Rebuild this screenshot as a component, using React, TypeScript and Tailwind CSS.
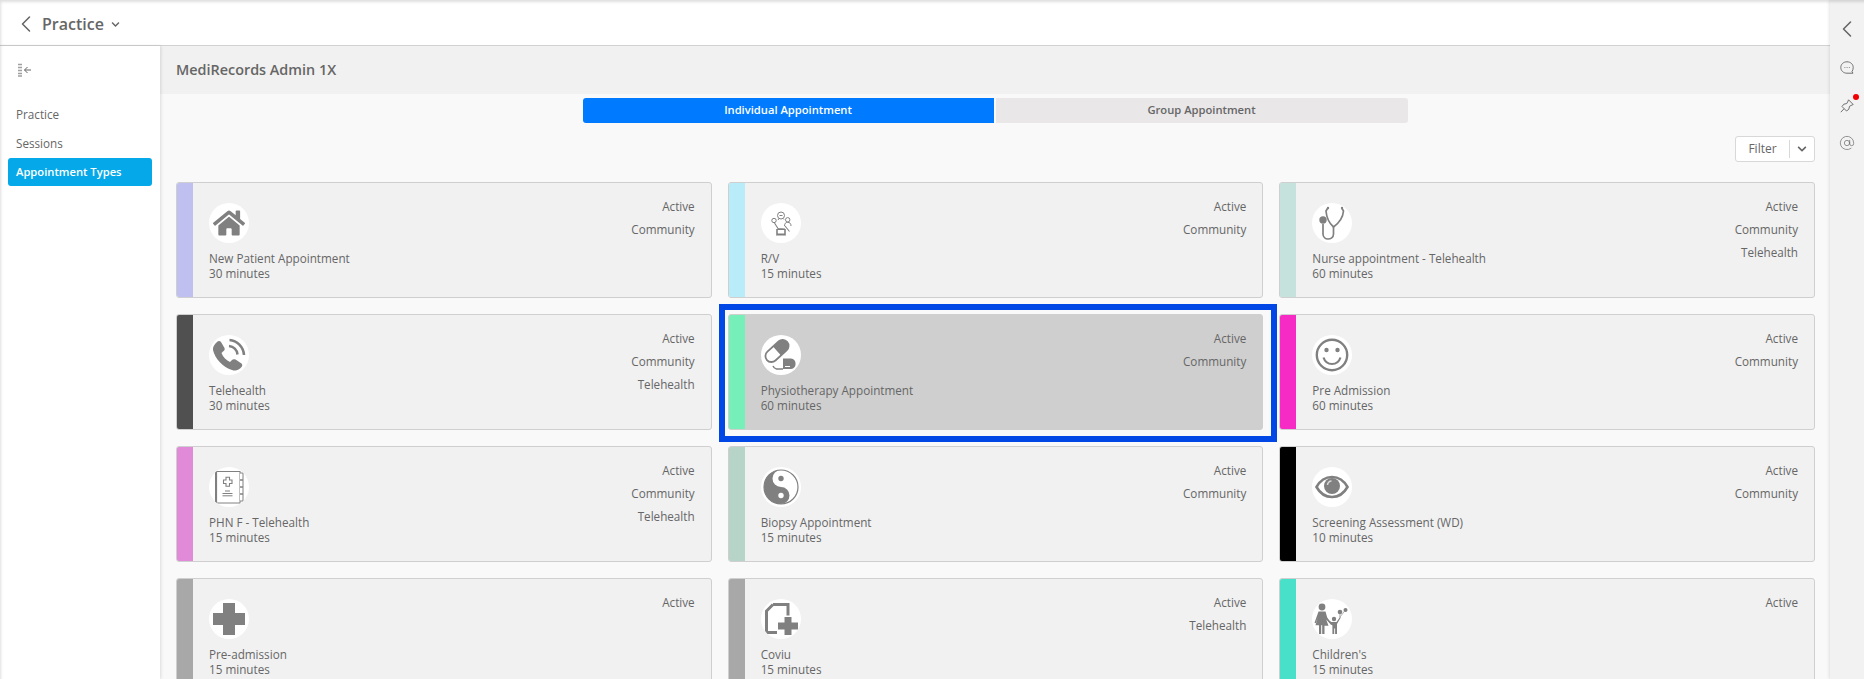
import { ReactNode } from "react"
import { FaHome, FaChevronDown } from "react-icons/fa"
import { ChevronLeft, AtSign } from "lucide-react"

const GREY = "#808080"

const DentistIcon = () => (
  <svg viewBox="0 0 40 40" className="h-10 w-10" fill="none" stroke={GREY} strokeWidth="1">
    <circle cx="20" cy="12.500" r="3.500" />
    <path d="M18.500 12.500h3M18 15.500l-1 1.500M22 15.500l1 1" />
    <circle cx="13" cy="17.500" r="2.200" />
    <circle cx="26.700" cy="16.800" r="2.200" />
    <path d="M23.500 23c0-2.500 1.200-3.700 3.200-3.700s3.300 1.200 3.300 3.700" />
    <path d="M13.500 20l3.500 5.500 7 .5M24 23l4.500 5.500M16 26v5M24 26v5" strokeWidth="1.100" />
    <path d="M16 26.500h8v4.500h-8zM15 32h10" strokeWidth="1.100" />
  </svg>
)

const StethoscopeIcon = () => (
  <svg viewBox="0 0 40 40" className="h-10 w-10" fill="none" stroke={GREY} strokeWidth="1.700">
    <path d="M15.500 5.500L14 8c.5 6 3 12 7.500 16 5.500-4 9.500-10 10-16l-1.500-2.500" />
    <path d="M21.500 24v7c0 3.500-3 5-5.500 5s-5-1.800-5-5v-10" />
    <circle cx="11" cy="17" r="3.700" fill={GREY} stroke="none" />
    <circle cx="16" cy="5" r="1.200" fill={GREY} stroke="none" />
    <circle cx="30" cy="5" r="1.200" fill={GREY} stroke="none" />
  </svg>
)

const PhoneIcon = () => (
  <svg viewBox="0 0 40 40" className="h-10 w-10" fill="none">
    <path
      d="M8 7c1.500-1.500 3-1 4 0l3.500 6c.5 1.500 0 2.500-1.500 3.500L12.500 18c1.500 4 5 7.500 8.500 9l2-2c1-1 2-1 3.500-.5l6 4c1 1 1 2.500 0 3.500-2.500 3-5.500 4.500-9.500 3C14 32 6 24 4 15c-.5-3 1.500-6 4-8z"
      fill={GREY}
    />
    <path d="M20 11c4.500.5 8 4 8.500 8.500M20.500 5c7.500.5 14 7 14.500 15" stroke={GREY} strokeWidth="2.600" />
  </svg>
)

const PillsIcon = () => (
  <svg viewBox="0 0 40 40" className="h-10 w-10" fill="none">
    <path d="M22 23.500h8a5.300 5.300 0 0 1 0 10.500h-8z" fill={GREY} />
    <path d="M22 34h-6.500a5 5 0 0 1-3.500-3" stroke={GREY} strokeWidth="1.500" />
    <path d="M24 31.500h5" stroke="#fff" strokeWidth="1" />
    <g transform="rotate(-42 16 16)">
      <rect x="2.500" y="10" width="27" height="12" rx="6" fill="#fff" stroke={GREY} strokeWidth="1.800" />
      <path d="M16 10h7.500a6 6 0 0 1 0 12H16z" fill={GREY} />
    </g>
  </svg>
)

const SmileIcon = () => (
  <svg viewBox="0 0 40 40" className="h-10 w-10" fill="none" stroke={GREY}>
    <circle cx="20" cy="20" r="15.200" strokeWidth="2.400" />
    <circle cx="14.500" cy="15" r="2.200" fill={GREY} stroke="none" />
    <circle cx="25.500" cy="15" r="2.200" fill={GREY} stroke="none" />
    <path d="M11.500 22.500c1.500 4.500 4.600 6.500 8.500 6.500s7-2 8.500-6.500" strokeWidth="2.200" />
  </svg>
)

const BookIcon = () => (
  <svg viewBox="0 0 40 40" className="h-10 w-10" fill="none" stroke={GREY}>
    <rect x="6.500" y="4.500" width="24.500" height="31.500" strokeWidth="1" fill="#fff" />
    <path d="M7.500 4.500v31.500" strokeWidth="1.200" />
    <path d="M14.500 13h2.500v-2.800h3.500V13h2.500v3.500h-2.500v2.800H17v-2.800h-2.500z" strokeWidth="1.100" />
    <path d="M16 24h5M13.500 26.500h10M13.500 28.800h10" strokeWidth="1" />
    <path d="M31 6h3v7h-3M31 13h3v7h-3M31 20h3v7h-3M31 27h3v7h-3" strokeWidth="1" fill="#fff" />
  </svg>
)

const YinYangIcon = () => (
  <svg viewBox="0 0 40 40" className="h-10 w-10">
    <circle cx="20" cy="20" r="17" fill="#fff" stroke={GREY} strokeWidth="1.200" />
    <path d="M20 3a17 17 0 0 0 0 34 8.500 8.500 0 0 0 0-17 8.500 8.500 0 0 1 0-17z" fill={GREY} />
    <circle cx="20" cy="11.500" r="2.700" fill={GREY} />
    <circle cx="20" cy="28.500" r="2.700" fill="#fff" />
  </svg>
)

const EyeIcon = () => (
  <svg viewBox="0 0 40 40" className="h-10 w-10" fill="none">
    <path d="M4.500 20c3.600-6.400 9-10 15.500-10s11.900 3.600 15.500 10c-3.600 6.400-9 10-15.500 10S8.100 26.400 4.500 20z" stroke={GREY} strokeWidth="2.600" />
    <circle cx="20" cy="19" r="8" fill={GREY} />
    <path d="M15.500 18c0-2.200 1.800-4 4-4" stroke="#d9d9d9" strokeWidth="1.500" />
  </svg>
)

const PlusIcon = () => (
  <svg viewBox="0 0 40 40" className="h-10 w-10">
    <path d="M14 4h12v10h10v12H26v10H14V26H4V14h10z" fill={GREY} />
  </svg>
)

const FilePlusIcon = () => (
  <svg viewBox="0 0 40 40" className="h-10 w-10" fill="none">
    <path d="M12 5.500h15v11M12 5.500L5.500 12v21.500H16" stroke={GREY} strokeWidth="3" />
    <path d="M23.500 18h7v5.500H37v7h-6.500V36h-7v-5.500H17v-7h6.500z" fill={GREY} />
  </svg>
)

const FamilyIcon = () => (
  <svg viewBox="0 0 40 40" className="h-10 w-10" fill={GREY}>
    <circle cx="10" cy="8" r="3.400" />
    <path d="M6.500 12.500h7l1.700 6 5 6.700-1 .8-5-5.500 2.300 6.300h-4V35h-2.300v-8.700h-1V35H7v-8.700H3.500l2.300-8-2 6-1.300-.5z" />
    <circle cx="22" cy="20" r="2.200" />
    <path d="M19.500 23h5l3.500-5 .8.500-3.800 6.500V35h-1.900v-5.500h-.9V35h-1.800v-8.500l-4-4 .8-.8z" />
    <circle cx="28" cy="13" r="2.300" />
    <circle cx="33.500" cy="11" r="2" />
    <path d="M27.800 18.500L28 14M28 18l5-6.500" stroke={GREY} strokeWidth=".6" fill="none" />
  </svg>
)

const BubbleIcon = () => (
  <svg viewBox="0 0 14 14" className="h-[14px] w-[14px]" fill="none" stroke="#707070" strokeWidth="1">
    <path d="M7 .8C3.400.8.800 3.300.800 6.500S3.400 12.200 7 12.200h6l-1-1.700c.8-1 1.200-2.500 1.200-4C13.200 3.300 10.600.8 7 .8z" />
    <path d="M4.500 6.500h.8M6.700 6.500h.8M8.900 6.500h.8" />
  </svg>
)

const ThumbtackIcon = () => (
  <svg viewBox="0 0 14 14" className="h-[14px] w-[14px]" fill="none" stroke="#707070" strokeWidth="1" strokeLinejoin="round">
    <path d="M8.500 .8l4.700 4.700-1.200.5-2.500 1.300-.7 3L6.500 12 2 7.500l1.800-2.300 3-.7 1.300-2.500z" />
    <path d="M4 9.800L.8 13.200" />
  </svg>
)

interface Appointment {
  name: string
  duration: string
  color: string
  icon: ReactNode
  tags: string[]
}

const APPOINTMENTS: Appointment[] = [
  { name: "New Patient Appointment", duration: "30 minutes", color: "#c0c0f0", icon: <FaHome size={32} color={GREY} />, tags: ["Active", "Community"] },
  { name: "R/V", duration: "15 minutes", color: "#b8ecf8", icon: <DentistIcon />, tags: ["Active", "Community"] },
  { name: "Nurse appointment - Telehealth", duration: "60 minutes", color: "#c6e2dc", icon: <StethoscopeIcon />, tags: ["Active", "Community", "Telehealth"] },
  { name: "Telehealth", duration: "30 minutes", color: "#505050", icon: <PhoneIcon />, tags: ["Active", "Community", "Telehealth"] },
  { name: "Physiotherapy Appointment", duration: "60 minutes", color: "#76efb8", icon: <PillsIcon />, tags: ["Active", "Community"] },
  { name: "Pre Admission", duration: "60 minutes", color: "#f62bc5", icon: <SmileIcon />, tags: ["Active", "Community"] },
  { name: "PHN F - Telehealth", duration: "15 minutes", color: "#e08ad8", icon: <BookIcon />, tags: ["Active", "Community", "Telehealth"] },
  { name: "Biopsy Appointment", duration: "15 minutes", color: "#b6d4c8", icon: <YinYangIcon />, tags: ["Active", "Community"] },
  { name: "Screening Assessment (WD)", duration: "10 minutes", color: "#000000", icon: <EyeIcon />, tags: ["Active", "Community"] },
  { name: "Pre-admission", duration: "15 minutes", color: "#a8a8a8", icon: <PlusIcon />, tags: ["Active"] },
  { name: "Coviu", duration: "15 minutes", color: "#a8a8a8", icon: <FilePlusIcon />, tags: ["Active", "Telehealth"] },
  { name: "Children's", duration: "15 minutes", color: "#48e0c8", icon: <FamilyIcon />, tags: ["Active"] },
]

function AppointmentCard({ item, selected }: { item: Appointment; selected?: boolean }) {
  return (
    <div
      className={`relative flex h-[116px] rounded-[3px] border ${selected ? "border-[#cfcfcf] bg-[#cfcfcf]" : "border-[#cfcfcf] bg-[#f1f1f1]"}`}
    >
      {/* Highlight frame drawn over the selected card */}
      {selected && (
        <div className="pointer-events-none absolute -bottom-[13px] -left-[10px] -right-[15px] -top-[11px] border-[6px] border-[#0047e6]" />
      )}
      <div className="w-4 shrink-0 rounded-l-[2px]" style={{ backgroundColor: item.color }} />
      <div className="flex flex-1 justify-between pl-4 pr-4">
        <div className="pt-5">
          <div className="flex h-10 w-10 items-center justify-center overflow-hidden rounded-full bg-white">
            {item.icon}
          </div>
          <p className="mt-2 leading-[15px]">{item.name}</p>
          <p className="leading-[15px]">{item.duration}</p>
        </div>
        <div className="flex flex-col items-end gap-[7px] pt-[15px]">
          {item.tags.map((tag) => (
            <span key={tag} className="leading-4">{tag}</span>
          ))}
        </div>
      </div>
    </div>
  )
}

export default function App() {
  return (
    <div className="relative flex h-[679px] w-[1864px] overflow-hidden bg-white font-['Open_Sans','Noto_Sans',sans-serif] text-[11.7px] text-[#666666]">
      <div className="flex min-w-0 flex-1 flex-col">
        <header className="flex h-[46px] shrink-0 items-center gap-[2px] border-b border-[#d2d2d2] pl-3 pt-[3px]">
          <ChevronLeft size={28} strokeWidth={1.300} color="#666666" />
          <span className="flex items-center gap-[7px] text-base font-semibold leading-none">
            Practice
            <FaChevronDown size={9} />
          </span>
        </header>

        <div className="flex min-h-0 flex-1">
          <aside className="z-10 w-[160px] shrink-0 bg-white px-2 shadow-[1px_0_3px_rgba(0,0,0,0.12)]">
            <div className="flex h-[48px] items-center pl-[10px]">
              <svg viewBox="0 0 14 14" className="h-[14px] w-[14px]" fill="none">
                <path d="M0 1.500h4M0 4.500h4M0 7.500h4M0 10.500h4M0 13h4" stroke="#a0a0a0" strokeWidth="1.600" />
                <path d="M13 7H6.500M9.500 4L6.500 7l3 3" stroke="#666666" strokeWidth="1" />
              </svg>
            </div>
            <nav className="mt-[6px] flex flex-col">
              <a className="flex h-[29px] items-center pl-2">Practice</a>
              <a className="flex h-[29px] items-center pl-2">Sessions</a>
              <a className="flex h-[28px] items-center rounded-[3px] bg-[#05a8e8] pl-2 text-[11.2px] font-semibold text-white">Appointment Types</a>
            </nav>
          </aside>

          <main className="flex min-w-0 flex-1 flex-col bg-[#f9f9f9]">
            <div className="flex h-[48px] shrink-0 items-center bg-[#f1f1f1] pl-4 text-[14.4px] font-semibold">MediRecords Admin 1X</div>

            <div className="mt-1 flex justify-center gap-[2px] text-[11.2px] font-semibold">
              <button className="flex h-[25px] w-[411px] items-center justify-center rounded-l-[3px] bg-[#007bff] text-white">Individual Appointment</button>
              <button className="flex h-[25px] w-[412px] items-center justify-center rounded-r-[3px] bg-[#e9e7e8]">Group Appointment</button>
            </div>

            <div className="mt-[13px] flex justify-end pr-[15px]">
              <div className="flex h-[26px] w-20 items-center rounded-[3px] border border-[#d8d8d8] bg-white">
                <span className="flex-1 text-center text-xs">Filter</span>
                <span className="flex h-[18px] w-[25px] items-center justify-center border-l border-[#d8d8d8]">
                  <FaChevronDown size={10} />
                </span>
              </div>
            </div>

            <div className="mt-5 grid grid-cols-3 gap-x-4 gap-y-4 pl-4 pr-[15px]">
              {APPOINTMENTS.map((item, i) => (
                <AppointmentCard key={item.name} item={item} selected={i === 4} />
              ))}
            </div>
          </main>
        </div>
      </div>

      <aside className="z-10 flex w-[34px] shrink-0 flex-col items-center bg-[#f2f2f2] pt-[15px] shadow-[-1px_0_3px_rgba(0,0,0,0.1)]">
        <ChevronLeft size={28} strokeWidth={1.300} color="#666666" />
        <div className="mt-[18px]"><BubbleIcon /></div>
        <div className="relative mt-6">
          <ThumbtackIcon />
          <span className="absolute -right-[5px] -top-[5px] h-[6px] w-[6px] rounded-full bg-[#f00000]" />
        </div>
        <AtSign size={16} strokeWidth={1.100} color="#707070" className="mt-[22px]" />
      </aside>

      {/* Soft shadow along the top and left edges of the window */}
      <div className="pointer-events-none absolute inset-0 z-20 shadow-[inset_2px_3px_3px_-1px_rgba(0,0,0,0.13)]" />
    </div>
  )
}
